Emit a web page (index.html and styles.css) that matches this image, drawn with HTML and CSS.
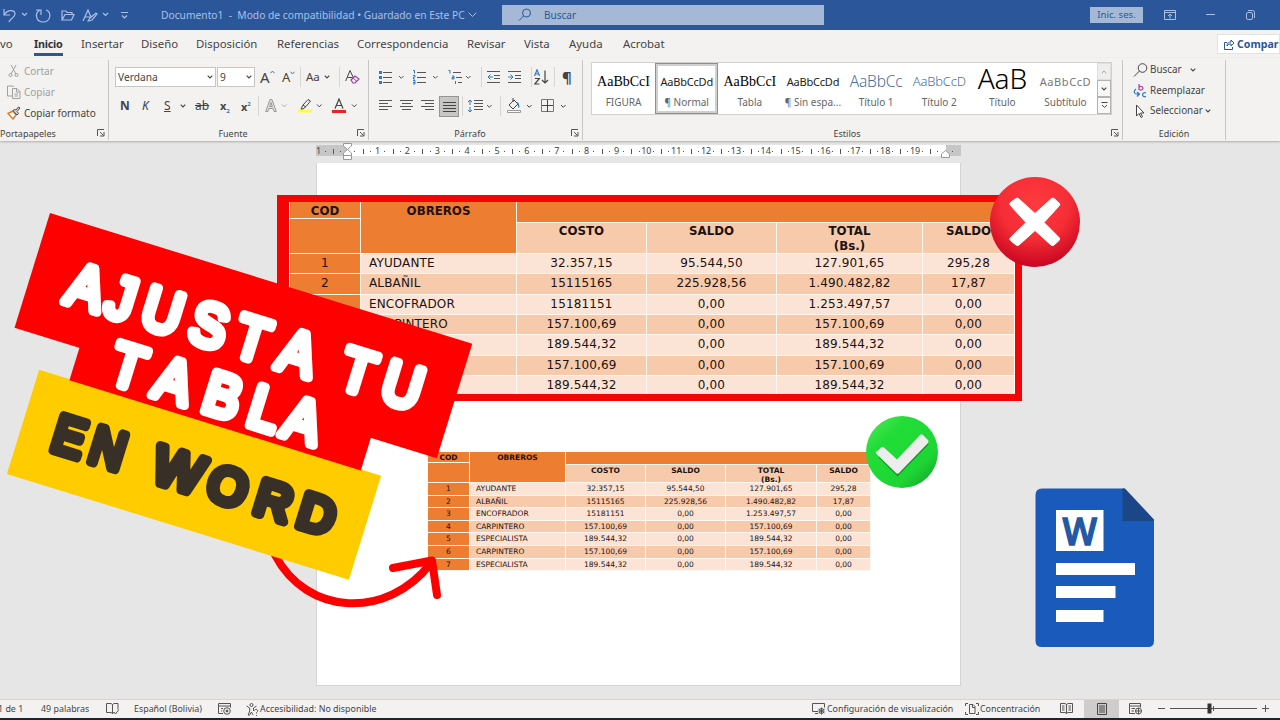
FILE: index.html
```
<!DOCTYPE html>
<html lang="es">
<head>
  <meta charset="UTF-8">
  <meta name="viewport" content="width=device-width, initial-scale=1.0">
  <title>Ajusta tu tabla en Word</title>
  <link rel="stylesheet" href="styles.css">
</head>
<body>
  <svg width="0" height="0" class="defs">
    <symbol id="chev" viewBox="0 0 6 4"><path d="M.7.7 3 3 5.3.7" fill="none" stroke="currentColor" stroke-width="1.1"/></symbol>
    <symbol id="launcher" viewBox="0 0 8 8"><path d="M.5 7V.5H7M3 3l3.5 3.5M7 3v4H3" fill="none" stroke="#555"/></symbol>
  </svg>

  <!-- Barra de título -->
  <header class="titlebar">
    <svg class="quick" width="132" height="30" viewBox="0 0 132 30" fill="none" stroke="#a9c0e6" stroke-width="1.2">
      <path d="M4 9v6h6M4.500 14.500C8 9 15 10 15 14c0 4-5 4-6 8"/>
      <path d="m22 13 2.500 2.500L27 13"/>
      <path d="M40 10c-6 3-4 12 3 12 8 0 9-10 3-12M36 10h5v5"/>
      <path d="M62 20V11h4l1 1.500h5V15M62 20l3-5.500h9L71.500 20z"/>
      <path d="m83 21 5-11 3 7M85 17h5M88 21l2-3 6-5 1 1-5 6-3 1z"/>
      <path d="m103 13 2.500 2.500L108 13M121 12.500h7M122 15.500l2.500 2.500 2.500-2.500"/>
    </svg>
    <span class="doc-name">Documento1&nbsp; - &nbsp;Modo de compatibilidad • Guardado en Este PC</span>
    <svg class="name-chev" width="9" height="6" viewBox="0 0 9 6"><path d="m.7.7 3.800 3.800L8.300.7" fill="none" stroke="#a9c0e6"/></svg>
    <div class="search">
      <svg width="14" height="14" viewBox="0 0 14 14" fill="none" stroke="#2b579a"><circle cx="8.500" cy="5" r="4"/><path d="M5.500 8 1 12.500"/></svg>
      <span>Buscar</span>
    </div>
    <span class="signin">Inic. ses.</span>
    <svg class="window-buttons" width="100" height="30" viewBox="0 0 100 30" fill="none" stroke="#a9c0e6">
      <path d="M.5 10.500h11v9H.5zM.5 12.500h11M6 18.500v-4M4 16l2-2 2 2M42 14.500h9"/>
      <rect x="82.500" y="12.500" width="6" height="7" rx="1.500"/><path d="M84 10.500h4.500q2 0 2 2V18"/>
    </svg>
  </header>

  <!-- Pestañas -->
  <nav class="tabs">
    <span>vo</span>
    <span class="active">Inicio</span>
    <span>Insertar</span>
    <span>Diseño</span>
    <span>Disposición</span>
    <span>Referencias</span>
    <span>Correspondencia</span>
    <span>Revisar</span>
    <span>Vista</span>
    <span>Ayuda</span>
    <span>Acrobat</span>
    <span class="share">
      <svg width="11" height="11" viewBox="0 0 11 11" fill="none" stroke="#2b579a"><path d="M3 3.500H.5v7h8V8M3 7c0-3 2-4 4-4V1l3 3-3 3V5C5 5 4 5.500 3 7z"/></svg>
      Compar
    </span>
  </nav>

  <!-- Cinta de opciones -->
  <section class="ribbon">
    <div class="group clipboard">
      <ul class="actions">
        <li class="off"><svg width="14" height="14" viewBox="0 0 14 14" fill="none" stroke="#a0a0a0"><path d="M4 1l5 9M9 1 4 10"/><circle cx="3.500" cy="11" r="1.500"/><circle cx="9.500" cy="11" r="1.500"/></svg>Cortar</li>
        <li class="off"><svg width="14" height="14" viewBox="0 0 14 14" fill="none" stroke="#a0a0a0"><path d="M5 11H.5V1H6l1 1M5.500 3.500H10l3 3v7H5.500zM9.500 4v3H13M7.500 9H11M7.500 11H11"/></svg>Copiar</li>
        <li><svg width="14" height="14" viewBox="0 0 14 14" fill="none"><path d="M1 7.500 6 5l3 4-3 4z" fill="#fff" stroke="#e07b28" stroke-width="1.400"/><path d="m6 4.500 4 4.500 1.500-1.500-1.500-2L13 2l-1.500-1L9 4 7.500 3.500z" stroke="#444" fill="#ddd"/></svg>Copiar formato</li>
      </ul>
      <div class="caption"><span>Portapapeles</span><svg width="8" height="8"><use href="#launcher"/></svg></div>
    </div>

    <div class="group font">
      <div class="tools font-top">
        <span class="combo">Verdana<svg width="6" height="4"><use href="#chev"/></svg></span>
        <span class="combo size">9<svg width="6" height="4"><use href="#chev"/></svg></span>
        <span class="letter big">A<svg width="5" height="4" viewBox="0 0 5 4"><path d="M.5 3.300 2.500 1l2 2.300" fill="none" stroke="#2b7cc0"/></svg></span>
        <span class="letter">A<svg width="5" height="4" viewBox="0 0 5 4"><path d="M.5.7 2.500 3l2-2.300" fill="none" stroke="#2b7cc0"/></svg></span>
        <i class="sep"></i>
        <span class="case">Aa<svg width="6" height="4"><use href="#chev"/></svg></span>
        <i class="sep"></i>
        <svg width="15" height="16" viewBox="0 0 15 16" fill="none" stroke="#444"><path d="M.7 12 5 1.500 9 10M2.500 8.500h5"/><path d="m6 11 4-4 4 3-4 4-2 0z" fill="#f3f2f1" stroke="#9b3fb0" stroke-width="1.200"/><path d="m8 9 4 3.500" stroke="#9b3fb0"/></svg>
      </div>
      <div class="tools font-bottom">
        <b>N</b>
        <em>K</em>
        <span class="under"><u>S</u><svg width="6" height="4"><use href="#chev"/></svg></span>
        <s>ab</s>
        <span class="script">x<sub>2</sub></span>
        <span class="script">x<sup>2</sup></span>
        <i class="sep"></i>
        <svg width="24" height="16" viewBox="0 0 24 16"><path d="M.7 13.500 5 1.500h2l4.300 12H9L8 10.500H4L3 13.500zM4.700 8.500h2.600L6 4.500z" fill="#ddd" stroke="#999"/><path d="m17 6.500 2.300 2.300 2.300-2.300" fill="none" stroke="#aaa"/></svg>
        <svg width="27" height="16" viewBox="0 0 27 16" fill="none" stroke="#444"><path d="M0 11.500h14v3H0z" fill="#ffff33" stroke="none"/><path d="M3 11 5 7l5-5.500L12.500 3 8 8.500 5 11zM5 7l3 2"/><path d="m19 6.500 2.300 2.300 2.300-2.300"/></svg>
        <svg width="27" height="16" viewBox="0 0 27 16" fill="none" stroke="#444"><path d="M0 12h14v3H0z" fill="#e22" stroke="none"/><path d="M3 10.500 7 1l4 9.500M4.500 7.500h5" stroke-width="1.200"/><path d="m20 6.500 2.300 2.300L24.600 6.500"/></svg>
      </div>
      <div class="caption"><span>Fuente</span><svg width="8" height="8"><use href="#launcher"/></svg></div>
    </div>

    <div class="group paragraph">
      <div class="tools par-top">
        <svg width="28" height="16" viewBox="0 0 28 16" fill="none" stroke="#555"><path d="M5 3.500h9M5 8.500h9M5 13.500h9"/><path d="M1 2h3v3H1zM1 7h3v3H1zM1 12h3v3H1z" fill="#2b7cc0" stroke="none"/><path d="m21 7 2.300 2.300L25.600 7"/></svg>
        <svg width="28" height="16" viewBox="0 0 28 16" fill="none" stroke="#555"><path d="M5 3.500h9M5 8.500h9M5 13.500h9"/><path d="M1 1.500h1.500v3M1 6.500h2v1.500H1.500V10H3M1 11.500h2v3.500H1M1 13.500h2" stroke="#2b7cc0"/><path d="m21 7 2.300 2.300L25.600 7"/></svg>
        <svg width="28" height="16" viewBox="0 0 28 16" fill="none" stroke="#555"><path d="M5 3.500h8M8 8.500h6M10 13.500h4"/><path d="M.5 1.500H2v3M4 7h2v3H4V8.500h2M7.500 12v3" stroke="#2b7cc0"/><path d="m18 7 2.300 2.300L22.600 7"/></svg>
        <i class="sep"></i>
        <svg width="14" height="14" viewBox="0 0 14 14" fill="none" stroke="#555"><path d="M0 1.500h13M7 5.500h6M7 8.500h6M0 12.500h13"/><path d="M6 7H1M3.500 4.500 1 7l2.500 2.500" stroke="#2b7cc0"/></svg>
        <svg width="14" height="14" viewBox="0 0 14 14" fill="none" stroke="#555"><path d="M0 1.500h13M7 5.500h6M7 8.500h6M0 12.500h13"/><path d="M0 7h5M2.500 4.500 5 7 2.500 9.500" stroke="#2b7cc0"/></svg>
        <i class="sep"></i>
        <svg width="15" height="16" viewBox="0 0 15 16" fill="none" stroke="#444" stroke-width="1.200"><path d="M.5 7 3 .8 5.500 7M1.500 5h3" stroke="#2b7cc0"/><path d="M.8 9.500h4.500L.8 15h4.700M11 1.500V14M8 11l3 3 3-3"/></svg>
        <i class="sep"></i>
        <span class="pilcrow">¶</span>
      </div>
      <div class="tools par-bottom">
        <svg width="13" height="14" viewBox="0 0 13 14" stroke="#555"><path d="M0 1.500h13M0 4.500h9M0 7.500h13M0 10.500h9"/></svg>
        <svg width="13" height="14" viewBox="0 0 13 14" stroke="#555"><path d="M0 1.500h13M2 4.500h9M0 7.500h13M2 10.500h9"/></svg>
        <svg width="13" height="14" viewBox="0 0 13 14" stroke="#555"><path d="M0 1.500h13M4 4.500h9M0 7.500h13M4 10.500h9"/></svg>
        <span class="pressed"><svg width="13" height="14" viewBox="0 0 13 14" stroke="#444"><path d="M0 1.500h13M0 4.500h13M0 7.500h13M0 10.500h13"/></svg></span>
        <i class="sep"></i>
        <svg width="26" height="14" viewBox="0 0 26 14" fill="none" stroke="#555"><path d="M7 1.500h9M7 4.500h9M7 7.500h9M7 10.500h9"/><path d="M3 1v5M1 3l2-2 2 2M3 8v5M1 11l2 2 2-2" stroke="#2b7cc0"/><path d="m20 6 2.300 2.300L24.600 6"/></svg>
        <i class="sep"></i>
        <svg width="27" height="16" viewBox="0 0 27 16" fill="none" stroke="#444"><path d="M.5 12.500h13v2H.5z" fill="#fff" stroke="#999"/><path d="m2 7 5-5 4 4-5 5zM6 0v4"/><path d="M12 9.500c-1-2 .5-3-2-5" stroke="#2b7cc0" stroke-width="1.300"/><path d="m20 7 2.300 2.300L24.600 7"/></svg>
        <svg width="27" height="16" viewBox="0 0 27 16" fill="none" stroke="#777"><path d="M.5 1.500h12v12H.5z"/><path d="M6.500 2v12M1 7.500h11" stroke="#444"/><path d="m20 7 2.300 2.300L24.600 7" stroke="#444"/></svg>
      </div>
      <div class="caption"><span>Párrafo</span><svg width="8" height="8"><use href="#launcher"/></svg></div>
    </div>

    <div class="group styles">
      <div class="gallery">
        <div class="style"><span class="sample serif">AaBbCcI</span><span>FIGURA</span></div>
        <div class="style selected"><span class="sample">AaBbCcDd</span><span>¶ Normal</span></div>
        <div class="style"><span class="sample serif">AaBbCcI</span><span>Tabla</span></div>
        <div class="style"><span class="sample">AaBbCcDd</span><span>¶ Sin espa...</span></div>
        <div class="style"><span class="sample title1">AaBbCc</span><span>Título 1</span></div>
        <div class="style"><span class="sample title2">AaBbCcD</span><span>Título 2</span></div>
        <div class="style"><span class="sample title">AaB</span><span>Título</span></div>
        <div class="style"><span class="sample subtitle">AaBbCcD</span><span>Subtítulo</span></div>
        <div class="scroller">
          <span class="off"><svg width="6" height="4" viewBox="0 0 6 4"><path d="M.7 3.300 3 1l2.300 2.300" fill="none" stroke="#aaa"/></svg></span>
          <span><svg width="6" height="4"><use href="#chev"/></svg></span>
          <span><svg width="7" height="7" viewBox="0 0 7 7"><path d="M.5.5h6M1 3l2.500 2.500L6 3" fill="none" stroke="#444"/></svg></span>
        </div>
      </div>
      <div class="caption"><span>Estilos</span><svg width="8" height="8"><use href="#launcher"/></svg></div>
    </div>

    <div class="group editing">
      <ul class="actions">
        <li><svg width="16" height="14" viewBox="0 0 16 14" fill="none" stroke="#444"><circle cx="9.500" cy="5" r="4.300"/><path d="M6.500 8 1 13.500"/></svg>Buscar<svg class="more" width="6" height="4"><use href="#chev"/></svg></li>
        <li><svg width="16" height="14" viewBox="0 0 16 14" fill="none" stroke-width="1.200"><path d="M6 0v6M6 3.500c1-2 4-1 4 .8s-3 2.500-4 .7" stroke="#a83fa8"/><path d="M13 9c-4-2-5 5 0 3.500" stroke="#2b7cc0"/><path d="M3 5C0 7 1 11 6 10M4 8l2.500 2L4 12.500" stroke="#2b7cc0"/></svg>Reemplazar</li>
        <li><svg width="16" height="14" viewBox="0 0 16 14" fill="#fff" stroke="#444"><path d="M3.500 1v11l2.500-2.500 2 4 1.500-.8-2-3.700H11z"/></svg>Seleccionar<svg class="more near" width="6" height="4"><use href="#chev"/></svg></li>
      </ul>
      <div class="caption"><span>Edición</span></div>
    </div>
  </section>

  <!-- Área del documento -->
  <main class="workspace">
    <div class="ruler">
      <div class="scale">
        <span class="first">1</span><span></span><span>1</span><span>2</span><span>3</span><span>4</span><span>5</span><span>6</span><span>7</span><span>8</span><span>9</span><span>10</span><span>11</span><span>12</span><span>13</span><span>14</span><span>15</span><span>16</span><span>17</span><span>18</span><span>19</span><span></span>
      </div>
      <svg class="indent-left" width="9" height="18" viewBox="0 0 9 18" fill="#fff" stroke="#999"><path d="M.5.5h8V3l-4 3.500L.5 3zM.5 12.500V10l4-3.500 4 3.500v2.500zM.5 12.500h8v4h-8z"/></svg>
      <svg class="indent-right" width="9" height="8" viewBox="0 0 9 8" fill="#fff" stroke="#999"><path d="M.5 7.500V4l4-3.500 4 3.500v3.500z"/></svg>
    </div>
    <div class="page"></div>

    <div class="frame">
      <table class="budget">
        <thead>
          <tr><th class="cod">COD</th><th class="cod-rest"></th><th class="workers">OBREROS</th><th class="band"></th></tr>
          <tr><th class="col costo">COSTO</th><th class="col">SALDO</th><th class="col">TOTAL<br>(Bs.)</th><th class="col">SALDO</th></tr>
        </thead>
        <tbody>
          <tr><td>1</td><td>AYUDANTE</td><td>32.357,15</td><td>95.544,50</td><td>127.901,65</td><td>295,28</td></tr>
          <tr><td>2</td><td>ALBAÑIL</td><td>15115165</td><td>225.928,56</td><td>1.490.482,82</td><td>17,87</td></tr>
          <tr><td></td><td>ENCOFRADOR</td><td>15181151</td><td>0,00</td><td>1.253.497,57</td><td>0,00</td></tr>
          <tr><td></td><td>CARPINTERO</td><td>157.100,69</td><td>0,00</td><td>157.100,69</td><td>0,00</td></tr>
          <tr><td></td><td></td><td>189.544,32</td><td>0,00</td><td>189.544,32</td><td>0,00</td></tr>
          <tr><td></td><td></td><td>157.100,69</td><td>0,00</td><td>157.100,69</td><td>0,00</td></tr>
          <tr><td></td><td></td><td>189.544,32</td><td>0,00</td><td>189.544,32</td><td>0,00</td></tr>
        </tbody>
      </table>
    </div>

    <table class="budget small">
      <thead>
        <tr><th class="cod">COD</th><th class="cod-rest"></th><th class="workers">OBREROS</th><th class="band"></th></tr>
        <tr><th class="col costo">COSTO</th><th class="col">SALDO</th><th class="col">TOTAL<br>(Bs.)</th><th class="col">SALDO</th></tr>
      </thead>
      <tbody>
        <tr><td>1</td><td>AYUDANTE</td><td>32.357,15</td><td>95.544,50</td><td>127.901,65</td><td>295,28</td></tr>
        <tr><td>2</td><td>ALBAÑIL</td><td>15115165</td><td>225.928,56</td><td>1.490.482,82</td><td>17,87</td></tr>
        <tr><td>3</td><td>ENCOFRADOR</td><td>15181151</td><td>0,00</td><td>1.253.497,57</td><td>0,00</td></tr>
        <tr><td>4</td><td>CARPINTERO</td><td>157.100,69</td><td>0,00</td><td>157.100,69</td><td>0,00</td></tr>
        <tr><td>5</td><td>ESPECIALISTA</td><td>189.544,32</td><td>0,00</td><td>189.544,32</td><td>0,00</td></tr>
        <tr><td>6</td><td>CARPINTERO</td><td>157.100,69</td><td>0,00</td><td>157.100,69</td><td>0,00</td></tr>
        <tr><td>7</td><td>ESPECIALISTA</td><td>189.544,32</td><td>0,00</td><td>189.544,32</td><td>0,00</td></tr>
      </tbody>
    </table>

    <svg class="arrow" width="190" height="80" viewBox="0 0 190 80" fill="none" stroke="#fe0000" stroke-width="8" stroke-linecap="round" stroke-linejoin="round">
      <path d="M15 15C47 76 127 80 171 23M133 28l39-7.500 5 34.500"/>
    </svg>

    <!-- Rótulo inclinado -->
    <div class="banner">
      <svg class="strip line1" width="442" height="120" viewBox="0 0 442 120">
        <text class="narrow" x="63 104 152 206 256 309" y="81">AJUSTA</text>
        <text class="narrow" x="379 431" y="81">TU</text>
      </svg>
      <svg class="strip line2" width="305" height="35" viewBox="0 0 305 35">
        <text class="narrow" x="58 111 168 217 261" y="25">TABLA</text>
      </svg>
      <svg class="strip line3" width="358" height="109" viewBox="0 0 358 109">
        <text class="narrow" x="54 99" y="73">EN</text>
        <text x="163" y="73">W<tspan class="rest" x="215 263 308">ORD</tspan></text>
      </svg>
    </div>

    <svg class="badge wrong" width="90" height="90" viewBox="0 0 90 90">
      <defs><radialGradient id="red" cx=".5" cy=".3" r=".7"><stop offset="0" stop-color="#ff3b3f"/><stop offset=".55" stop-color="#f52d35"/><stop offset="1" stop-color="#c90522"/></radialGradient></defs>
      <circle cx="45" cy="45" r="45" fill="url(#red)"/>
      <path d="M20.500 28.500Q19 27 20.500 25.500L26 21.500Q27.500 20.500 29 22L45 36.500 61 22q1.500-1.500 3-.5l5 4.500q1.500 1.500 0 3L54 45.500 69 60.500q1.500 1.500 0 3L64 68q-1.500 1-3 0L45 53.500 29 68q-1.500 1-3 0l-5.500-4.500q-1.500-1.500 0-3L36 45.500z" fill="#fff" stroke="#fff"/>
    </svg>
    <svg class="badge right" width="72" height="72" viewBox="0 0 72 72">
      <defs><linearGradient id="green" x1="0" y1="0" x2=".9" y2="1"><stop offset="0" stop-color="#5be85a"/><stop offset=".3" stop-color="#22dd38"/><stop offset=".75" stop-color="#1dd534"/><stop offset="1" stop-color="#13a329"/></linearGradient></defs>
      <circle cx="36" cy="36" r="36" fill="url(#green)"/>
      <path d="M15 37.500 31 53.500 59 24.500" transform="translate(.5 .5)" fill="none" stroke="#129a25" stroke-width="9"/>
      <path d="m12 34.500 3-3q1.500-1 3 0L31 43.500 54 19q1.500-1.500 3 0l5 5q1 1.500 0 3L33 57q-1.500 1.500-3 0L10 37.500Q9 36 12 34.500z" fill="#ededed"/>
    </svg>

    <svg class="word-file" width="120" height="160" viewBox="0 0 120 160">
      <path d="M7 .5h82L119 33v120q0 6-6 6H7q-6.500 0-6.500-6V7Q.5.5 7 .5z" fill="#1a5aba"/>
      <path d="M87.500.5H90L119 31.500V33H87.500z" fill="#1b4687"/>
      <path d="M21 22h47.500v41H21zM21 75h79v12H21zM21 98h59.500v12H21zM21 122h47.500v12H21z" fill="#fff"/>
      <text x="27.500" y="56.500" textLength="34.500" lengthAdjust="spacingAndGlyphs">W</text>
    </svg>
  </main>

  <!-- Barra de estado -->
  <footer class="statusbar">
    <span class="pages">1 de 1</span>
    <span>49 palabras</span>
    <svg width="13" height="12" viewBox="0 0 13 12" fill="none" stroke="#555"><path d="M6.500 1.500 5 .5H.5v9H5l1.500 1 1.500-1M6.500 1.500v9M6.500 1.500 8 .5h4v6M8 9l1.500 2L13 6.500"/></svg>
    <span>Español (Bolivia)</span>
    <svg width="14" height="12" viewBox="0 0 14 12" fill="none" stroke="#555"><path d="M5 10.500H.5V.5h12v4M.5 3h12M3 5.500h2M3 8h1"/><circle cx="9" cy="8" r="3.300"/><circle cx="9" cy="8" r="1" fill="#555"/></svg>
    <span class="with-icon"><svg width="13" height="13" viewBox="0 0 13 13" fill="none" stroke="#555"><circle cx="5.500" cy="2" r="1.500"/><path d="m.7 3 3 2v3l-1.500 4 1 .5L5.500 9l1.500 3M10.500 3l-3 2v3M8.500 7.500c1-2 4-1 3 1l-1 1v1M10.500 12v1"/></svg>Accesibilidad: No disponible</span>
    <span class="with-icon"><svg width="14" height="12" viewBox="0 0 14 12" fill="none" stroke="#555"><path d="M6 8.500H.5V.5h12v4M3 10.500h3"/><circle cx="9.500" cy="8" r="2.500"/><path d="M9.500 4.500v7M6.500 6l6 4M12.500 6l-6 4"/></svg>Configuración de visualización</span>
    <span class="with-icon"><svg width="14" height="12" viewBox="0 0 14 12" fill="none" stroke="#555"><path d="M3 .5H.5V3M11 .5h2.500V3M3 11.500H.5V9M11 11.500h2.500V9M4.500 1.500H8l2 2v7H4.500zM7.500 2v2.500H10"/></svg>Concentración</span>
    <svg width="13" height="12" viewBox="0 0 13 12" fill="none" stroke="#555"><path d="M6.500 1.500 5 .5H.5v9H5l1.500 1 1.500-1h4.500v-9H8zM6.500 1.500v9M2 3h2.500M2 5h2.500M2 7h2.500M8.500 3H11M8.500 5H11M8.500 7H11"/></svg>
    <span class="view-on"><svg width="10" height="12" viewBox="0 0 10 12" fill="none" stroke="#444"><path d="M.5.5h9v11h-9zM2 3h6M2 5h6M2 7h6M2 9h6"/></svg></span>
    <svg width="13" height="12" viewBox="0 0 13 12" fill="none" stroke="#555"><path d="M6 10.500H.5V.5h11v4M.5 3h11M2.500 5.500H6M2.500 8H5"/><circle cx="9.500" cy="8" r="3"/><path d="M6.500 8h6M9.500 5v6"/></svg>
    <svg width="112" height="12" viewBox="0 0 112 12" stroke="#555"><path d="M0 5.500h7M12 5.500h87M55.500 3v5M104 5.500h7M107.500 2v7"/><path d="M49.500.5h4v10h-4z" fill="#333" stroke="none"/></svg>
  </footer>
</body>
</html>
```
FILE: styles.css
```
/* Base */
* { box-sizing: border-box; }
body { margin: 0; width: 1280px; height: 720px; overflow: hidden; display: flex; flex-direction: column; background: #e6e6e6; font-family: "Noto Sans", "Open Sans", sans-serif; font-size: 10px; line-height: 1; color: #444; }
svg { display: block; flex: none; }
ul { list-style: none; margin: 0; padding: 0; }
.defs { position: absolute; }

/* Barra de título */
.titlebar { height: 30px; display: flex; align-items: center; background: #2b579a; color: #a9c0e6; flex: none; white-space: nowrap; }
.doc-name { width: 308px; margin-left: 29px; font-size: 10.25px; }
.name-chev { margin: 0 25px 0 -1px; }
.search { width: 322px; height: 20px; display: flex; align-items: center; gap: 12px; padding-left: 16px; background: #a5b9d6; color: #2b579a; font-size: 10px; }
.signin { width: 53px; height: 16px; margin: 0 21px 0 266px; line-height: 16px; text-align: center; background: #a5b9d6; color: #2b579a; font-size: 9.6px; }

/* Pestañas */
.tabs { height: 28px; flex: none; display: grid; grid-template-columns: 34px 47px 60px 55px 81px 80px 110px 57px 45px 54px 594px 63px; align-items: center; background: #f3f2f1; font-size: 11.4px; white-space: nowrap; }
.tabs .active { width: 29px; padding: 8px 0 4px; border-bottom: 3px solid #2b579a; font-weight: bold; font-size: 10.8px; color: #333; letter-spacing: -0.25px; margin-top: -1px; }
.share { height: 20px; display: flex; align-items: center; gap: 2px; padding-left: 6px; background: #fff; border: 1px solid #e3e3e3; color: #2b579a; font-weight: bold; font-size: 10.6px; }

/* Cinta */
.ribbon { height: 83px; flex: none; display: flex; background: #f3f2f1; box-shadow: 0 1px 2px rgba(0,0,0,0.25); position: relative; white-space: nowrap; }
.group { display: flex; flex-direction: column; height: 80px; margin-top: 2px; border-right: 1px solid #c8c6c4; }
.clipboard { width: 109px; }
.font { width: 260px; }
.paragraph { width: 214px; }
.styles { width: 540px; }
.editing { width: 103px; }
.actions { height: 66px; }
.actions li { height: 21px; display: flex; align-items: center; gap: 3px; font-size: 10px; }
.clipboard li { padding-left: 7px; }
.editing li { padding-left: 10px; gap: 1px; font-size: 9.9px; height: 20.5px; }
.off { color: #a0a0a0; }
.more { margin-left: 7px; }
.more.near { margin-left: 1px; }
.caption { margin-top: auto; height: 14px; display: flex; align-items: center; font-size: 9px; }
.caption span { flex: 1; text-align: center; }
.caption svg { margin-right: 3px; }
.clipboard .caption span { text-align: left; }
.tools { display: grid; align-items: center; height: 28px; }
.tools:first-child { margin: 3px 0 1px; }
.font-top { grid-template-columns: 102px 43px 22px 18px 6px 33px 6px 20px; padding-left: 6px; }
.font-bottom { grid-template-columns: 22px 22px 31px 25px 21px 17px 7px 33px 34px 30px; padding-left: 11px; font-size: 12px; }
.par-top { grid-template-columns: 34px 36px 33px 6px 21px 23px 3px 20px 8px 15px; padding-left: 9px; }
.par-bottom { grid-template-columns: 21px 21px 18px 23px 5px 33px 7px 34px 30px; padding-left: 10px; }
.sep { width: 1px; height: 20px; background: #d8d6d4; }
.combo { width: 101px; height: 20px; display: flex; align-items: center; justify-content: space-between; padding: 0 2px; background: #fff; border: 1px solid #c8c6c4; font-size: 10.2px; }
.combo.size { width: 38px; }
.letter { display: flex; font-size: 13px; }
.letter.big { font-size: 15px; }
.case { display: flex; align-items: center; gap: 4px; font-size: 11.5px; }
.under { display: flex; align-items: center; gap: 9px; }
.script { font-weight: bold; font-size: 11px; }
.script sub, .script sup { font-size: 6px; color: #2b7cc0; line-height: 0; }
.pilcrow { font-size: 15px; font-weight: bold; }
.pressed { width: 20px; height: 21px; padding: 4px 0 0 3px; background: #c8c6c4; border: 1px solid #979593; }

/* Galería de estilos */
.gallery { display: flex; width: 521px; height: 53px; margin: 2px 0 0 8px; background: #fff; border: 1px solid #d2d0ce; }
.style { width: 63.3px; overflow: hidden; display: flex; flex-direction: column; align-items: center; font-size: 10px; color: #666; }
.style.selected { outline: 1px solid #8f8f8f; outline-offset: -1px; border: 3px solid #d0d0d0; }
.sample { height: 34px; flex: none; display: flex; align-items: center; padding-top: 3px; color: #222; font-size: 11px; line-height: 1; letter-spacing: -0.2px; }
.selected .sample { height: 31px; padding-top: 0; }
.serif { font-family: "Liberation Serif", serif; font-size: 14px; color: #000; letter-spacing: 0; }
.title1 { font-size: 15.500px; color: #4a6fa5; font-weight: 300; }
.title2 { font-size: 13px; color: #4a6fa5; font-weight: 300; }
.title { font-size: 28px; font-weight: 300; color: #000; padding: 0 0 4px; }
.subtitle { color: #777; letter-spacing: 0.6px; }
.scroller { width: 14px; display: grid; grid-template-rows: 17px 17px 17px; }
.scroller span { display: grid; place-items: center; border: 1px solid #b5b3b1; background: #f8f8f8; }
.scroller .off { border-color: #ddd; background: #eee; }

/* Documento */
.workspace { position: relative; height: 558px; flex: none; padding-top: 4px; }
.ruler { position: relative; width: 645px; height: 11px; margin-left: 316px; background: linear-gradient(90deg, #c6c6c6 31px, #fff 31px, #fff 630px, #c6c6c6 630px); }
.scale { display: flex; height: 11px; }
.scale span { width: 29.87px; flex: none; text-align: center; font-size: 9px; line-height: 12.5px; background: linear-gradient(#555, #555) 0 60% / 1px 5px no-repeat, linear-gradient(#555, #555) 25% 60% / 1px 1px no-repeat, linear-gradient(#555, #555) 75% 60% / 1px 1px no-repeat; }
.scale .first { width: 16.8px; text-align: left; background: linear-gradient(#555, #555) 9px 60% / 1px 1px no-repeat; }
.indent-left { position: absolute; left: 27px; top: -2px; }
.indent-right { position: absolute; left: 625px; top: 5px; }
.page { width: 645px; height: 523px; margin: 7px 0 0 316px; background: #fff; border: 1px solid #d4d4d4; border-top: 0; }

/* Tablas */
.frame { position: absolute; left: 277px; top: 54px; width: 745px; height: 206px; padding: 7px 7px 7px 12px; background: #f40505; }
.budget { display: grid; grid-template-columns: 71px 156px 130px 130px 146px 92px; grid-template-rows: 17px 4px 31px repeat(7, 20.35px); height: 192px; width: 726px; overflow: hidden; border-left: 1px solid #fff; font-family: "DejaVu Sans", Verdana, sans-serif; font-size: 12px; line-height: 18px; color: #1c1210; background: #fbe4d5; }
.budget thead, .budget tbody, .budget tr { display: contents; }
.budget th, .budget td { padding: 0; border: solid #fff7f0; border-width: 0 1px 1px 0; text-align: center; white-space: nowrap; }
.budget th { font-size: 11.8px; line-height: 18px; }
.budget td { background: #fbe4d5; letter-spacing: 0.15px; }
.budget tr:nth-child(even) td { background: #f7caac; }
.budget .cod, .budget .cod-rest, .budget .workers, .budget .band, .budget tr td:first-child { background: #ed7d31; }
.budget td:nth-child(2) { text-align: left; padding-left: 8px; }
.budget .cod { grid-area: 1 / 1; }
.budget .cod-rest { grid-area: 2 / 1 / 4 / 2; }
.budget .workers { grid-area: 1 / 2 / 4 / 3; }
.budget .band { grid-area: 1 / 3 / 3 / 7; }
.budget .col { grid-row: 3; background: #f7caac; line-height: 15px; padding-top: 1px; }
.budget .costo { grid-column: 3; }
.budget.small { position: absolute; left: 427px; top: 311px; width: 444px; height: 119px; grid-template-columns: 42px 96px 80px 80px 91px 54px; grid-template-rows: 11px 2px 18px repeat(7, 12.6px); font-size: 7.5px; line-height: 11px; }
.budget.small th { font-size: 7.5px; line-height: 11px; }
.budget.small td { letter-spacing: 0; }
.budget.small .col { line-height: 9px; padding-top: 1px; }
.budget.small td:nth-child(2) { padding-left: 6px; }

/* Elementos superpuestos */
.arrow { position: absolute; left: 260px; top: 399px; }
.banner { position: absolute; left: 50px; top: 71.5px; width: 442px; transform: rotate(17.2deg); transform-origin: 0 0; }
.strip { overflow: visible; position: relative; }
.strip text { font-family: "Liberation Sans", Arial, sans-serif; font-size: 60px; text-anchor: middle; stroke-width: 9px; stroke-linejoin: round; stroke-linecap: round; fill: #fff; stroke: #fff; }
.strip .narrow { transform: scaleX(0.9); }
.line1, .line2 { background: #fe0000; }
.line2 { margin-left: 68px; margin-top: -1px; z-index: 1; }
.line3 { margin: -1px 0 0 36px; background: #ffcc00; }
.line3 text { font-size: 53px; fill: #382f26; stroke: #382f26; }
.line3 .rest { font-size: 50px; }
.badge.wrong { position: absolute; left: 989.5px; top: 35.5px; }
.badge.right { position: absolute; left: 865.5px; top: 275px; }
.word-file { position: absolute; left: 1035px; top: 347px; }
.word-file text { font-family: "Open Sans", sans-serif; font-size: 38px; font-weight: 600; fill: #2458a5; stroke: #2458a5; stroke-width: 1.4px; }

/* Barra de estado */
.statusbar { height: 21px; flex: none; display: grid; grid-template-columns: 41px 65px 28px 84px 28px 566px 153px 95px 24px 45px 29px 120px; align-items: center; background: #f3f2f1; border-top: 1px solid #d4d4d4; border-bottom: 2px solid #1d242b; font-size: 8.9px; white-space: nowrap; }
.pages { margin-left: -2px; }
.with-icon { display: flex; align-items: center; gap: 1px; }
.view-on { width: 35px; height: 18px; display: grid; place-items: center; background: #cfcdcb; }
```
